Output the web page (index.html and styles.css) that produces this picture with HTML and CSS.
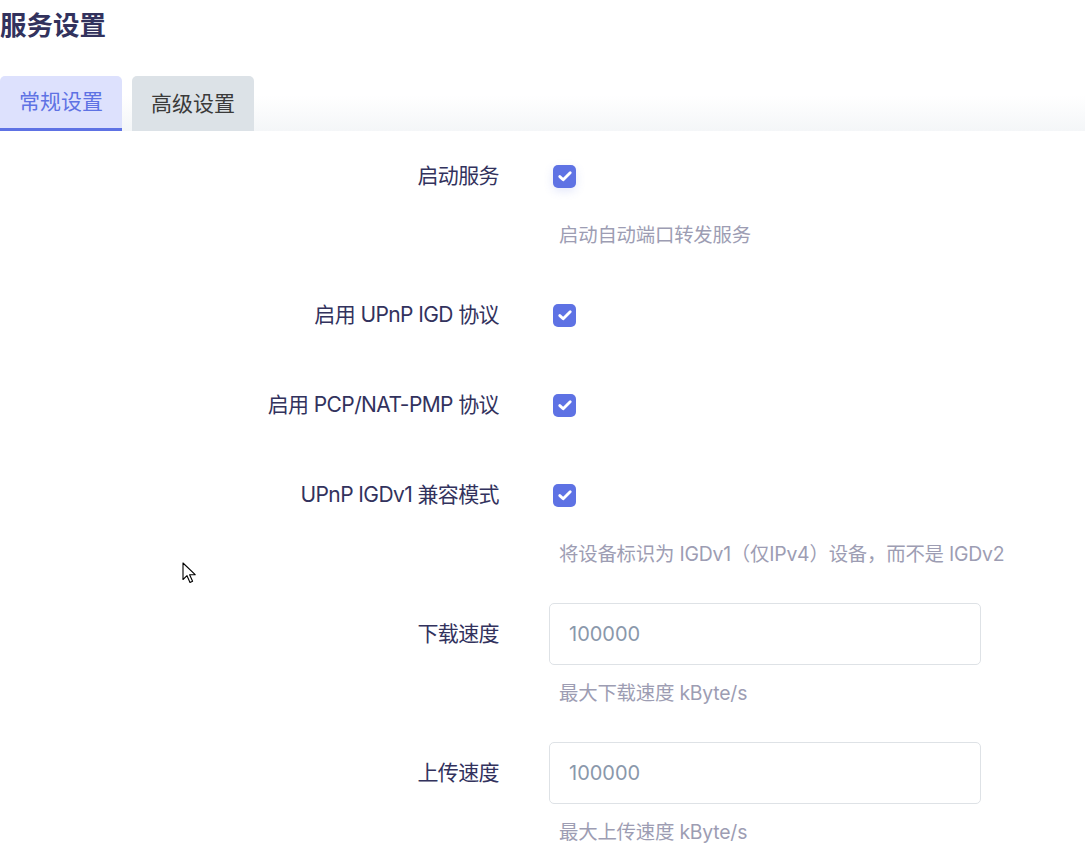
FILE: index.html
```html
<!DOCTYPE html>
<html lang="zh-CN">
<head>
    <meta charset="UTF-8">
    <meta name="viewport" content="width=device-width, initial-scale=1.0">
    <title>服务设置</title>
    <link rel="stylesheet" href="styles.css">
</head>
<body>
    <div class="pageCls">
        <h2 class="pageTitle">服务设置</h2>
        <div class="tabBarCls">
            <div class="tabCls tabActive">常规设置</div>
            <div class="tabCls">高级设置</div>
        </div>
        <div class="formCls">
            <div class="rowCls">
                <label class="labelCls">启动服务</label>
                <div class="fieldCls"><span class="checkCls checkFocus"><svg viewBox="0 0 16 16" width="16" height="16"><path d="M2.8 8.6l3.4 3.1 7-7" fill="none" stroke="#fff" stroke-width="2.9" stroke-linecap="round" stroke-linejoin="round"/></svg></span></div>
                <div class="descCls">启动自动端口转发服务</div>
            </div>
            <div class="rowCls">
                <label class="labelCls">启用 UPnP IGD 协议</label>
                <div class="fieldCls"><span class="checkCls"><svg viewBox="0 0 16 16" width="16" height="16"><path d="M2.8 8.6l3.4 3.1 7-7" fill="none" stroke="#fff" stroke-width="2.9" stroke-linecap="round" stroke-linejoin="round"/></svg></span></div>
            </div>
            <div class="rowCls">
                <label class="labelCls">启用 PCP/NAT-PMP 协议</label>
                <div class="fieldCls"><span class="checkCls"><svg viewBox="0 0 16 16" width="16" height="16"><path d="M2.8 8.6l3.4 3.1 7-7" fill="none" stroke="#fff" stroke-width="2.9" stroke-linecap="round" stroke-linejoin="round"/></svg></span></div>
            </div>
            <div class="rowCls">
                <label class="labelCls">UPnP IGDv1 兼容模式</label>
                <div class="fieldCls"><span class="checkCls"><svg viewBox="0 0 16 16" width="16" height="16"><path d="M2.8 8.6l3.4 3.1 7-7" fill="none" stroke="#fff" stroke-width="2.9" stroke-linecap="round" stroke-linejoin="round"/></svg></span></div>
                <div class="descCls">将设备标识为 IGDv1（仅IPv4）设备，而不是 IGDv2</div>
            </div>
            <div class="rowCls">
                <label class="labelCls" for="down">下载速度</label>
                <div class="fieldCls"><input type="text" id="down" class="inputCls" placeholder="100000"></div>
                <div class="descCls">最大下载速度 kByte/s</div>
            </div>
            <div class="rowCls">
                <label class="labelCls" for="up">上传速度</label>
                <div class="fieldCls"><input type="text" id="up" class="inputCls" placeholder="100000"></div>
                <div class="descCls">最大上传速度 kByte/s</div>
            </div>
        </div>
        <svg class="cursorCls" width="14" height="22" viewBox="0 0 14 22"><path d="M1 1v16.5l4-3.8 3 6.8 2.6-1.2-3-6.6h5.6z" fill="#fff" stroke="#000" stroke-width="1.1" stroke-linejoin="round"/></svg>
    </div>
</body>
</html>
```

FILE: styles.css
```css
*{margin:0;padding:0;box-sizing:border-box;}
body{background:#fff;font-family:Inter,"Noto Sans CJK SC",sans-serif;color:#32325d;overflow:hidden;}
.pageCls{position:relative;width:1085px;height:865px;}
.pageTitle{font-size:26.5px;font-weight:700;line-height:50px;color:#32325d;}
.tabBarCls{display:flex;gap:10px;margin-top:26px;height:55px;background:linear-gradient(to bottom,#fff 35%,#f4f6f8);}
.tabCls{width:122px;height:55px;line-height:55px;text-align:center;font-size:21px;color:#3a3a3a;background:#dce2e7;border-radius:5px 5px 0 0;}
.tabActive{background:#dde1fd;color:#5e72e4;border-bottom:3px solid #5e72e4;line-height:52px;}
.formCls{padding-top:14px;}
.rowCls{display:grid;grid-template-columns:499px 432px;column-gap:50px;margin-bottom:28px;}
.labelCls{grid-column:1;text-align:right;align-self:center;padding-bottom:4px;font-size:21px;letter-spacing:-0.6px;color:#32325d;}
.fieldCls{grid-column:2;height:62px;display:flex;align-items:center;}
.descCls{grid-column:2;margin-top:18px;margin-bottom:11px;padding-left:10px;line-height:20px;font-size:19.4px;letter-spacing:-0.2px;color:#9d9db3;white-space:nowrap;}
.checkCls{margin-left:4px;width:23px;height:23px;border-radius:5px;background:#5e72e4;display:flex;align-items:center;justify-content:center;}
.checkFocus{box-shadow:0 3px 10px rgba(94,114,228,.18);}
.inputCls{width:432px;height:62px;border:1px solid #dee2e6;border-radius:5px;padding:0 19px;font-family:Inter,sans-serif;font-size:20px;color:#32325d;outline:none;}
.inputCls::placeholder{color:#8a98ab;}
.cursorCls{position:absolute;left:182px;top:562px;}
```
